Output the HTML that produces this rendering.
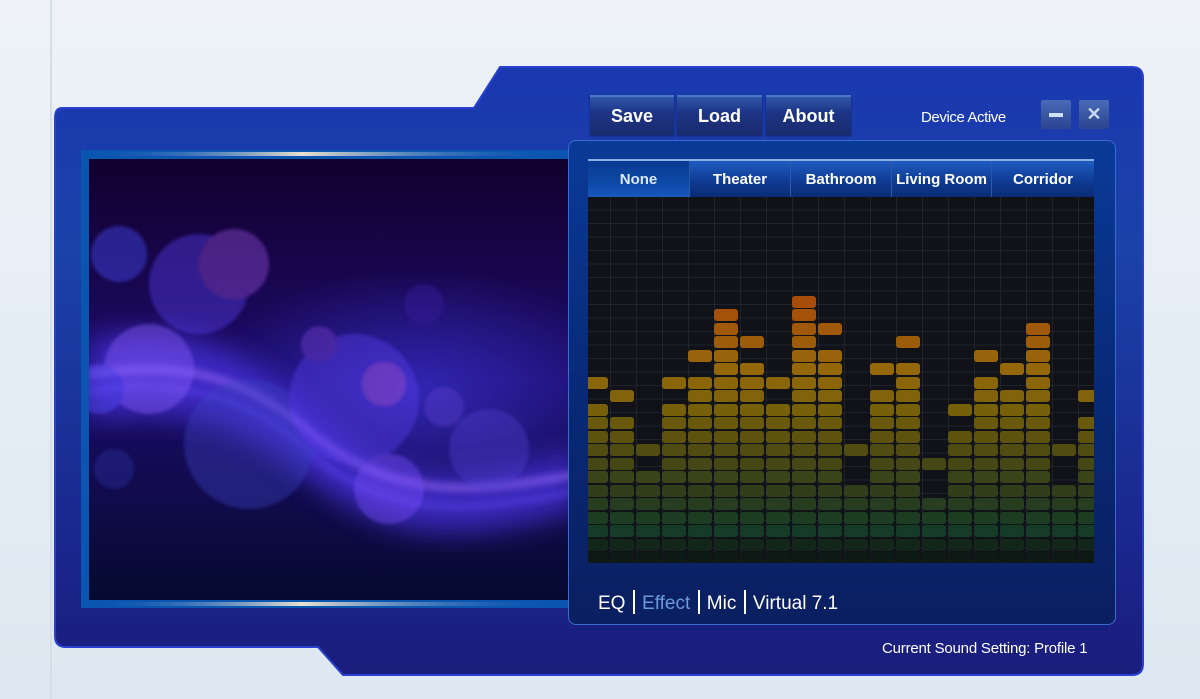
<!DOCTYPE html>
<html><head><meta charset="utf-8"><style>
*{margin:0;padding:0;box-sizing:border-box}
body{width:1200px;height:699px;overflow:hidden;position:relative;background:linear-gradient(180deg,#eef2f6 0%,#e4edf5 60%,#dde8f2 100%);font-family:"Liberation Sans",sans-serif}
.abs{position:absolute}
.btn{position:absolute;top:95px;height:40px;background:linear-gradient(180deg,#2f56a8 0%,#1d3585 40%,#1a2a6e 100%);border-top:2px solid #4a78c8;color:#fff;font-weight:bold;font-size:18px;text-align:center;line-height:38px;box-shadow:0 1px 2px rgba(0,0,0,.4)}
.sq{position:absolute;top:100px;width:30px;height:29px;background:linear-gradient(180deg,#4a6ab8,#2a4490);border-radius:2px;color:#c8d8f0;font-weight:bold;text-align:center}
.tab{position:absolute;top:0;height:38px;color:#fff;font-weight:bold;font-size:15px;text-align:center;line-height:38px;background:linear-gradient(180deg,#1f5cc0 0%,#0f3d96 50%,#0a2a70 100%);border-right:1px solid #2a5aa8}
.blk{position:absolute;width:24px;height:12px;border-radius:3px}
</style></head><body>
<div class="abs" style="left:50px;top:0;width:2px;height:699px;background:#d5dde6"></div>
<svg class="abs" style="left:0;top:0" width="1200" height="699">
<defs>
<linearGradient id="fg" x1="0" y1="0" x2="0" y2="1">
<stop offset="0" stop-color="#1a38b0"/><stop offset="0.3" stop-color="#1a42a8"/><stop offset="0.75" stop-color="#1a2890"/><stop offset="1" stop-color="#1a1d7c"/></linearGradient>
<linearGradient id="hl" x1="0" x2="1"><stop offset="0" stop-color="#1a5ab8" stop-opacity="0"/><stop offset="0.45" stop-color="#e8e0d0"/><stop offset="1" stop-color="#1a5ab8" stop-opacity="0"/></linearGradient>
</defs>
<path d="M62 108 L474 108 L500 67 L1132 67 Q1143 67 1143 78 L1143 664 Q1143 675 1132 675 L343 675 L318 647 L66 647 Q55 647 55 636 L55 118 Q55 108 62 108 Z" fill="url(#fg)" stroke="#2a40d0" stroke-width="2"/>
<rect x="81" y="150" width="500" height="458" fill="#0a55b0"/>
<rect x="90" y="152" width="470" height="4" fill="url(#hl)"/>
<rect x="90" y="602" width="470" height="4" fill="url(#hl)"/>
</svg>
<svg class="abs" style="left:89px;top:159px" width="490" height="441">
<defs>
<linearGradient id="bg" x1="0" y1="0" x2="0" y2="1"><stop offset="0" stop-color="#12002e"/><stop offset="0.5" stop-color="#1c0c6a"/><stop offset="1" stop-color="#060a30"/></linearGradient>
<filter id="b2"><feGaussianBlur stdDeviation="1.5"/></filter>
<filter id="b4"><feGaussianBlur stdDeviation="4"/></filter>
<filter id="b10"><feGaussianBlur stdDeviation="14"/></filter>
<radialGradient id="rg"><stop offset="0" stop-color="#3a30d0" stop-opacity=".7"/><stop offset="1" stop-color="#3a30d0" stop-opacity="0"/></radialGradient>
</defs>
<rect width="490" height="441" fill="url(#bg)"/>
<ellipse cx="330" cy="230" rx="220" ry="120" fill="url(#rg)"/>
<path d="M0 180 C100 160 150 190 220 250 C300 330 360 330 490 290 L490 350 C360 390 290 380 210 310 C150 260 90 250 0 260 Z" fill="#4a30e0" opacity=".75" filter="url(#b10)"/>
<path d="M0 215 C100 200 160 220 230 280 C310 340 380 335 490 315" stroke="#a070ff" stroke-width="6" fill="none" opacity=".7" filter="url(#b4)"/>
<path d="M0 232 C100 217 170 242 230 302 C310 362 390 352 490 332" stroke="#6a50ff" stroke-width="4" fill="none" opacity=".6" filter="url(#b4)"/>
<g fill="#5a40f0" opacity=".4" filter="url(#b2)">
<circle cx="110" cy="125" r="50"/><circle cx="30" cy="95" r="28" fill="#4a50ff"/><circle cx="60" cy="210" r="45" fill="#8a60ff"/><circle cx="145" cy="105" r="35" fill="#9a50e0"/>
<circle cx="160" cy="285" r="65" fill="#3a40c0"/><circle cx="265" cy="240" r="65"/><circle cx="295" cy="225" r="22" fill="#c060f0"/><circle cx="300" cy="330" r="35" fill="#7a50ff"/>
<circle cx="355" cy="248" r="20" fill="#6040d0"/><circle cx="400" cy="290" r="40" fill="#5040d0"/><circle cx="10" cy="230" r="25" fill="#5a50ff"/><circle cx="25" cy="310" r="20" fill="#2a30a0"/>
<circle cx="335" cy="145" r="20" fill="#3a1aa0"/><circle cx="230" cy="185" r="18" fill="#7a40d0"/>
</g>
</svg>
<div class="btn" style="left:590px;width:84px">Save</div>
<div class="btn" style="left:677px;width:85px">Load</div>
<div class="btn" style="left:766px;width:85px">About</div>
<div class="abs" style="left:921px;top:109px;color:#fff;font-size:15px;letter-spacing:-0.4px">Device Active</div>
<div class="sq" style="left:1041px"><div style="position:absolute;left:8px;top:13px;width:14px;height:4px;background:#d0e0f8"></div></div>
<div class="sq" style="left:1079px;font-size:18px;line-height:29px">✕</div>
<div class="abs" style="left:568px;top:140px;width:548px;height:485px;border-radius:8px;background:linear-gradient(180deg,#0a3a98 0%,#082a78 50%,#0a1f60 100%);border:1px solid #3a6ad0"></div>
<div class="abs" style="left:588px;top:159px;width:506px;height:38px;border-top:2px solid #8ab0e8;overflow:hidden">
<div class="tab" style="left:0;width:102px;background:linear-gradient(180deg,#0a3a90,#0c4aa8 60%,#1a5ac0);color:#dde8ff">None</div>
<div class="tab" style="left:102px;width:101px">Theater</div>
<div class="tab" style="left:203px;width:101px">Bathroom</div>
<div class="tab" style="left:304px;width:100px">Living Room</div>
<div class="tab" style="left:404px;width:102px;border-right:none">Corridor</div>
</div>
<div id="eq" class="abs" style="left:588px;top:197px;width:506px;height:366px;overflow:hidden;background-color:#101218;background-image:linear-gradient(90deg,rgba(60,70,90,.3) 1px,transparent 1px),linear-gradient(0deg,rgba(60,70,90,.3) 1px,transparent 1px);background-size:26px 13.5px;background-position:-4px 0"></div>
<div class="abs" style="left:598px;top:590px;font-size:19px;color:#fff;white-space:nowrap">EQ <span style="display:inline-block;width:2px;height:24px;background:#fff;vertical-align:-5px;margin:0 2px"></span> <span style="color:#6a9ad8">Effect</span> <span style="display:inline-block;width:2px;height:24px;background:#fff;vertical-align:-5px;margin:0 2px"></span> Mic <span style="display:inline-block;width:2px;height:24px;background:#fff;vertical-align:-5px;margin:0 2px"></span> Virtual 7.1</div>
<div class="abs" style="left:882px;top:640px;font-size:15px;color:#fff;letter-spacing:-0.2px">Current Sound Setting: Profile 1</div>
<script>
var d=[[11,9],[10,8],[6,4],[11,9],[13,11],[16,16],[14,12],[11,9],[17,17],[15,13],[6,3],[12,10],[14,12],[5,2],[9,7],[13,11],[12,10],[15,15],[6,3],[10,8]];
function col(k){var s=[[0,[20,60,38]],[3,[48,62,28]],[6,[80,76,18]],[9,[118,96,10]],[12,[148,104,10]],[15,[160,88,10]],[17,[168,76,10]]];
for(var i=0;i<s.length-1;i++){if(k<=s[i+1][0]){var t=(k-s[i][0])/(s[i+1][0]-s[i][0]);var a=s[i][1],b=s[i+1][1];return 'rgb('+a.map(function(v,j){return Math.round(v+(b[j]-v)*t)}).join(',')+')'}}return 'rgb(168,76,10)'}
var h='';for(var i=0;i<20;i++){var x=-4+26*i;var p=d[i][0],f=d[i][1];
for(var k=-2;k<=p;k++){if(k>f&&k<p)continue;var y=328-13.5*k;var c=k<0?(k==-1?'rgb(18,38,26)':'rgb(14,24,20)'):col(k);
h+='<div class="blk" style="left:'+x+'px;top:'+y+'px;background:'+c+'"></div>'}}
document.getElementById('eq').innerHTML=h;
</script>
</body></html>
